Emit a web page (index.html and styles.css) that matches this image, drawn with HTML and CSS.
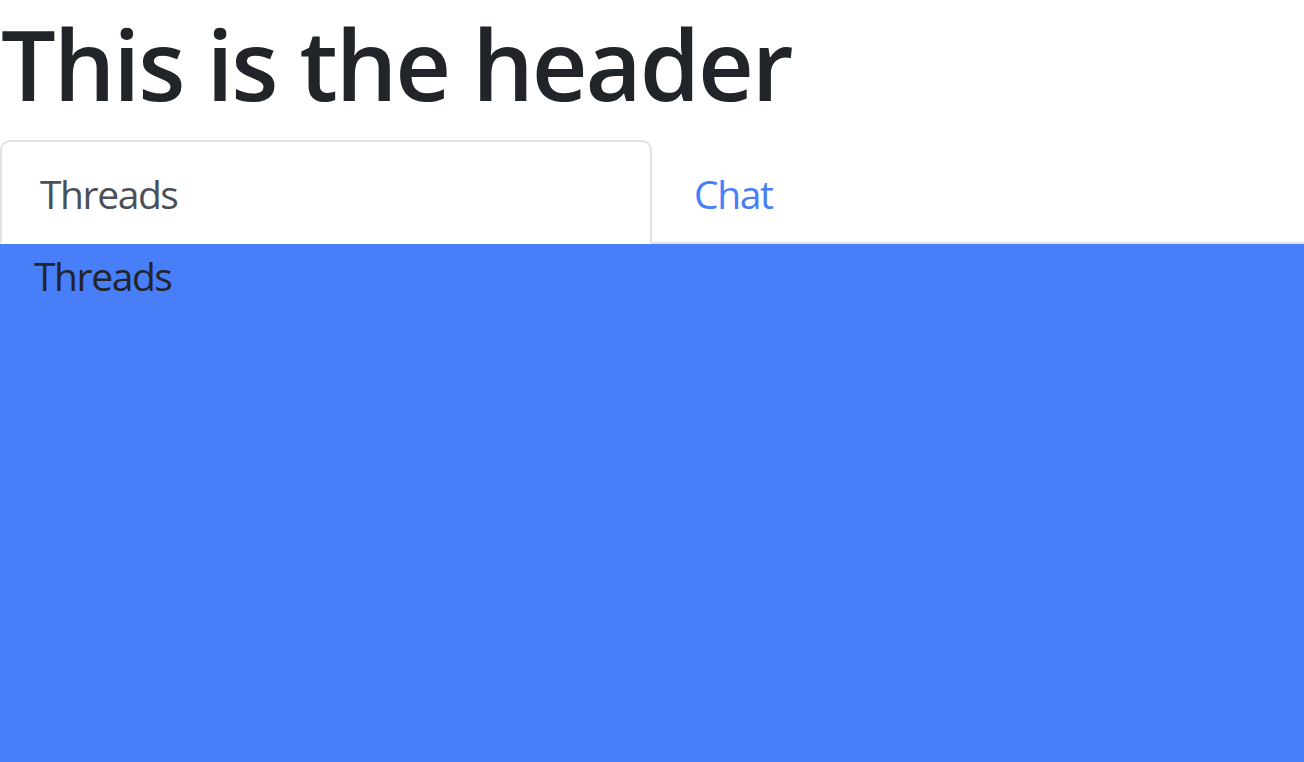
FILE: index.html
```html
<!DOCTYPE html>
<html>
<head>
<meta charset="utf-8">
<link rel="stylesheet" href="styles.css">
</head>
<body>
<h1 class="title">This is the header</h1>
<ul class="tabs">
  <li class="tab-item"><a class="tab-link active">Threads</a></li>
  <li class="tab-item"><a class="tab-link">Chat</a></li>
</ul>
<div class="pane">
  <div class="pane-text">Threads</div>
</div>
</body>
</html>
```
FILE: styles.css
```css
html, body {
  margin: 0;
  height: 100%;
}
body {
  font-family: "Open Sans", "Noto Sans", sans-serif;
  font-size: 39px;
  line-height: 60px;
  color: #212529;
  background: #fff;
  display: flex;
  flex-direction: column;
  overflow: hidden;
}
.title {
  margin: 0 0 17px 0;
  padding: 3px 0 0 1px;
  font-size: 97px;
  font-weight: 600;
  line-height: 120px;
  letter-spacing: -2.1px;
}
.tabs {
  list-style: none;
  margin: 0;
  padding: 0;
  display: flex;
  border-bottom: 2.5px solid #dee2e6;
}
.tab-item {
  flex: 1 1 0;
  margin-bottom: -2.5px;
}
.tab-link {
  display: block;
  padding: 22px 40px 18px 40px;
  border: 2.5px solid transparent;
  border-top-left-radius: 10px;
  border-top-right-radius: 10px;
  color: #487ef8;
  letter-spacing: -1.4px;
}
.tab-link.active {
  padding-left: 38px;
  color: #495057;
  background: #fff;
  border-color: #dee2e6 #dee2e6 #fff;
}
.pane {
  flex: 1;
  background: #487ef8;
  padding: 2px 35px 0 34px;
}
.pane-text {
  letter-spacing: -1.4px;
}
```
